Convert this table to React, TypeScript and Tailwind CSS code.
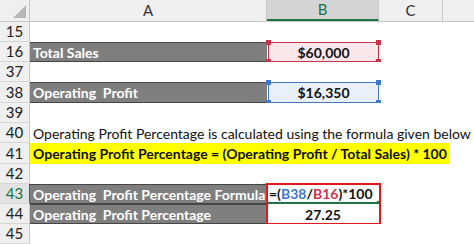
import type { ReactNode } from "react";

const font = { fontFamily: "Lato, 'Open Sans', sans-serif" };

function RowHead({ n, active = false }: { n: number; active?: boolean }) {
  return (
    <div
      className={`flex w-[30px] shrink-0 items-center justify-center border-b border-r text-[15px] ${
        active ? "border-r-[#217346] bg-[#e2e2e2] text-[#217346]" : "border-r-[#c8c8c8] bg-[#efefef] text-[#222]"
      } border-b-[#d6d6d6]`}
    >
      {n}
    </div>
  );
}

function Row({ n, h, active, children }: { n: number; h: string; active?: boolean; children?: ReactNode }) {
  return (
    <div className={`flex ${h}`}>
      <RowHead n={n} active={active} />
      <div className="relative flex flex-1 bg-white">{children}</div>
    </div>
  );
}

function GrayBar({ text }: { text: string }) {
  return (
    <div className="flex w-[237px] items-center overflow-visible whitespace-pre border-y border-[#454545] bg-[#7f7f7f] pl-[3px] text-[14px] font-bold text-white">
      {text}
    </div>
  );
}

function Handle({ pos, color }: { pos: string; color: string }) {
  return <span className={`absolute h-[5px] w-[5px] ${pos} ${color}`} />;
}

function SelCell({ text, kind }: { text: string; kind: "red" | "blue" }) {
  const red = kind === "red";
  const c = red ? "bg-[#c9344a]" : "bg-[#3f78c8]";
  return (
    <div
      className={`relative ml-[1px] flex w-[111px] items-center justify-center border text-[14px] font-bold text-[#111] ${
        red ? "border-[#c9344a] bg-[#fbe7ea]" : "border-[#3f78c8] bg-[#e9f0fa]"
      }`}
    >
      {text}
      <Handle pos="-left-[3px] -top-[3px]" color={c} />
      <Handle pos="-right-[3px] -top-[3px]" color={c} />
      <Handle pos="-left-[3px] -bottom-[3px]" color={c} />
      <Handle pos="-right-[3px] -bottom-[3px]" color={c} />
    </div>
  );
}

export default function App() {
  return (
    <div className="h-[244px] w-[474px] overflow-hidden bg-white text-[#111]" style={font}>
      {/* column headers */}
      <div className="flex h-[22px] border-b border-[#c6c6c6] bg-[#efefef] text-[15px] text-[#333]">
        <div className="relative w-[30px] shrink-0 border-r border-[#c8c8c8]">
          <svg className="absolute bottom-[3px] right-[3px]" width="13" height="13" viewBox="0 0 13 13">
            <polygon points="13,0 13,13 0,13" fill="#b7b7b7" />
          </svg>
        </div>
        <div className="flex w-[237px] items-center justify-center border-r border-[#c8c8c8]">A</div>
        <div className="flex w-[112px] items-center justify-center border-b-2 border-r border-b-[#217346] border-r-[#c8c8c8] bg-[#d4d4d4] text-[#217346]">
          B
        </div>
        <div className="flex w-[64px] items-center justify-center border-r border-[#c8c8c8]">C</div>
        <div className="flex-1" />
      </div>

      <Row n={15} h="h-[20px]" />
      <Row n={16} h="h-[20px]">
        <GrayBar text="Total Sales" />
        <SelCell text="$60,000" kind="red" />
      </Row>
      <Row n={37} h="h-[20px]" />
      <Row n={38} h="h-[21px]">
        <GrayBar text="Operating  Profit" />
        <SelCell text="$16,350" kind="blue" />
      </Row>
      <Row n={39} h="h-[20px]" />
      <Row n={40} h="h-[20px]">
        <div className="flex items-center whitespace-nowrap pl-[3px] text-[14px]">
          Operating Profit Percentage is calculated using the formula given below
        </div>
      </Row>
      <Row n={41} h="h-[21px]">
        <div className="flex items-center whitespace-nowrap bg-[#ffff00] pl-[3px] pr-[3px] text-[14px] font-bold">
          Operating Profit Percentage = (Operating Profit / Total Sales) * 100
        </div>
      </Row>
      <Row n={42} h="h-[20px]" />

      {/* rows 43-44 with red outline over B */}
      <div className="relative">
        <Row n={43} h="h-[20px]" active>
          <GrayBar text="Operating  Profit Percentage Formula" />
          <div className="relative flex w-[112px] items-center whitespace-nowrap border-b-2 border-[#217346] pl-[2px] text-[14px] font-bold">
            <span>=(</span>
            <span className="text-[#3f78c8]">B38</span>
            <span>/</span>
            <span className="text-[#c9344a]">B16</span>
            <span>)*100</span>
            <span className="absolute -bottom-[3px] -right-[2px] h-[4px] w-[4px] bg-[#217346]" />
          </div>
        </Row>
        <Row n={44} h="h-[20px]">
          <GrayBar text="Operating  Profit Percentage" />
          <div className="flex w-[112px] items-center justify-center text-[14px] font-bold">27.25</div>
        </Row>
        <div className="pointer-events-none absolute left-[266px] top-[-1px] h-[42px] w-[115px] border-2 border-[#e8141c]" />
      </div>
      <Row n={45} h="h-[20px]" />
    </div>
  );
}
